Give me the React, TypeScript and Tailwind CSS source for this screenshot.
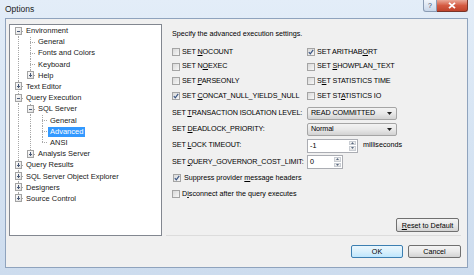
import React from 'react';

type Node = { label: string; depth: number; exp?: '+' | '-'; selected?: boolean };

const tree: Node[] = [
  { label: 'Environment', depth: 0, exp: '-' },
  { label: 'General', depth: 1 },
  { label: 'Fonts and Colors', depth: 1 },
  { label: 'Keyboard', depth: 1 },
  { label: 'Help', depth: 1, exp: '+' },
  { label: 'Text Editor', depth: 0, exp: '+' },
  { label: 'Query Execution', depth: 0, exp: '-' },
  { label: 'SQL Server', depth: 1, exp: '-' },
  { label: 'General', depth: 2 },
  { label: 'Advanced', depth: 2, selected: true },
  { label: 'ANSI', depth: 2 },
  { label: 'Analysis Server', depth: 1, exp: '+' },
  { label: 'Query Results', depth: 0, exp: '+' },
  { label: 'SQL Server Object Explorer', depth: 0, exp: '+' },
  { label: 'Designers', depth: 0, exp: '+' },
  { label: 'Source Control', depth: 0, exp: '+' },
];

const hasNext = (i: number) => {
  const d = tree[i].depth;
  for (let j = i + 1; j < tree.length; j++) {
    if (tree[j].depth < d) return false;
    if (tree[j].depth === d) return true;
  }
  return false;
};

const ancestorAt = (i: number, k: number) => {
  for (let j = i - 1; j >= 0; j--) if (tree[j].depth === k) return j;
  return -1;
};

const H = 11.2;

// one 12px column of the tree guide lines
const GuideCell = ({ up, down, across, exp }: { up: boolean; down: boolean; across: boolean; exp?: '+' | '-' }) => (
  <svg width="12" height={H} viewBox={`0 0 12 ${H}`} className="shrink-0" shapeRendering="crispEdges">
    {up && <line x1="6.5" y1="0" x2="6.5" y2={H / 2} stroke="#a8a8a8" strokeDasharray="1 1" />}
    {down && <line x1="6.5" y1={H / 2} x2="6.5" y2={H} stroke="#a8a8a8" strokeDasharray="1 1" />}
    {across && <line x1="6.5" y1={5.5} x2="12" y2={5.5} stroke="#a8a8a8" strokeDasharray="1 1" />}
    {exp && (
      <g>
        <defs>
          <linearGradient id="expg" x1="0" y1="0" x2="1" y2="1">
            <stop offset="0" stopColor="#ffffff" />
            <stop offset="1" stopColor="#dadada" />
          </linearGradient>
        </defs>
        <rect x="3" y="2" width="7" height="7" fill="url(#expg)" stroke="#a3a3a3" />
        <line x1="4.5" y1="5.5" x2="8.5" y2="5.5" stroke="#4a5a78" />
        {exp === '+' && <line x1="6.5" y1="3.5" x2="6.5" y2="7.5" stroke="#4a5a78" />}
      </g>
    )}
  </svg>
);

const TreeRow = ({ i }: { i: number }) => {
  const n = tree[i];
  const cells = [];
  for (let k = 0; k < n.depth; k++) {
    const a = ancestorAt(i, k);
    const cont = a >= 0 && hasNext(a);
    cells.push(<GuideCell key={k} up={cont} down={cont} across={false} />);
  }
  cells.push(<GuideCell key="own" up={i !== 0} down={hasNext(i)} across exp={n.exp} />);
  return (
    <div className="flex items-center" style={{ height: H }}>
      {cells}
      <span
        className={`px-[2px] leading-[10px] whitespace-nowrap ${n.selected ? 'bg-[#3399ff] text-white' : 'text-[#1a1a1a]'}`}
      >
        {n.label}
      </span>
    </div>
  );
};

const U = ({ children }: { children: React.ReactNode }) => (
  <span className="underline underline-offset-[1px] decoration-[0.6px]">{children}</span>
);

const Check = ({ checked }: { checked?: boolean }) => (
  <span className="w-[8px] h-[8px] shrink-0 border border-[#a4a4a4] bg-gradient-to-br from-[#d9d9d9] to-[#f7f7f7] flex items-center justify-center">
    {checked && (
      <svg width="6" height="6" viewBox="0 0 6 6">
        <path d="M0.8 3.2 L2.3 4.8 L5.2 0.9" fill="none" stroke="#3a5583" strokeWidth="1.2" />
      </svg>
    )}
  </span>
);

const CheckItem = ({ checked, children }: { checked?: boolean; children: React.ReactNode }) => (
  <div className="flex items-center gap-[2px] h-[14.67px] whitespace-nowrap">
    <Check checked={checked} />
    <span className="tracking-[-0.1px]">{children}</span>
  </div>
);

const Arrow = () => (
  <svg width="5" height="3" viewBox="0 0 5 3">
    <path d="M0 0 H5 L2.5 3 Z" fill="#222" />
  </svg>
);

const Select = ({ value }: { value: string }) => (
  <div className="w-[90px] h-[13px] border border-[#a5a5a5] rounded-[2px] bg-gradient-to-b from-[#f3f3f3] via-[#e8e8e8] to-[#d2d2d2] flex items-center justify-between pl-[3px] pr-[4px]">
    <span className="leading-[10px] tracking-[-0.1px]">{value}</span>
    <Arrow />
  </div>
);

const Spin = ({ value, w }: { value: string; w: string }) => (
  <div className={`${w} h-[14px] border border-[#abadb3] bg-white flex`}>
    <span className="flex-1 pl-[2px] leading-[11px]">{value}</span>
    <div className="w-[8px] flex flex-col gap-[1px] py-[1px] pr-[1px]">
      <div className="flex-1 border border-[#c9cdd3] bg-gradient-to-b from-[#f7f7f7] to-[#e2e2e2] flex items-center justify-center">
        <svg width="3" height="2" viewBox="0 0 3 2"><path d="M0 2 H3 L1.5 0 Z" fill="#5b6a80" /></svg>
      </div>
      <div className="flex-1 border border-[#c9cdd3] bg-gradient-to-b from-[#f7f7f7] to-[#e2e2e2] flex items-center justify-center">
        <svg width="3" height="2" viewBox="0 0 3 2"><path d="M0 0 H3 L1.5 2 Z" fill="#5b6a80" /></svg>
      </div>
    </div>
  </div>
);

const FieldRow = ({ label, children }: { label: React.ReactNode; children: React.ReactNode }) => (
  <div className="flex items-center h-[16.3px] whitespace-nowrap">
    <span className="w-[135px] shrink-0 tracking-[-0.1px]">{label}</span>
    {children}
  </div>
);

export default function App() {
  return (
    <div
      className="w-[474px] h-[275px] overflow-hidden flex flex-col bg-gradient-to-b from-[#e3edf8] via-[#d6e4f3] to-[#cddcee] text-black"
      style={{ fontFamily: '"Liberation Sans", Arial, sans-serif' }}
    >
      {/* title bar */}
      <div className="h-[18px] flex items-start shrink-0">
        <span className="pl-[5px] pt-[4px] text-[8.5px] leading-[10px] text-[#1b1b1b]">Options</span>
        <div className="ml-auto mr-[6px] flex">
          <div className="w-[14px] h-[12px] border border-t-0 border-[#8a9bb3] rounded-bl-[3px] bg-gradient-to-b from-[#f1f5fb] to-[#c9d7ea] flex items-center justify-center text-[7px] leading-none text-[#3a4b66]">
            ?
          </div>
          <div className="w-[31px] h-[12px] border border-t-0 border-l-0 border-[#7a3428] rounded-br-[3px] bg-gradient-to-b from-[#e9a898] via-[#d45a42] to-[#c0432b] flex items-center justify-center">
            <svg width="8" height="7" viewBox="0 0 8 7">
              <path d="M1 0.8 L7 6.2 M7 0.8 L1 6.2" stroke="#ffffff" strokeWidth="1.8" />
            </svg>
          </div>
        </div>
      </div>

      {/* client area */}
      <div className="ml-[5px] mr-[6px] h-[250px] border border-[#8fa3bd] bg-[#f0f0f0] flex flex-col">
        <div className="flex items-start">
          {/* tree */}
          <div className="ml-[3px] mt-[5px] w-[153px] h-[212px] shrink-0 border border-[#828790] bg-white pl-[2px] pt-[0.5px] text-[7.5px]">
            {tree.map((_, i) => (
              <TreeRow key={i} i={i} />
            ))}
          </div>

          {/* page */}
          <div className="flex-1 pl-[4px] pr-[6px] flex flex-col text-[7.2px]">
            <div className="pl-[6px] flex flex-col">
              <div className="mt-[10px] h-[10px] leading-[10px]">Specify the advanced execution settings.</div>

              <div className="mt-[5.7px] grid grid-cols-[135px_1fr]">
                <CheckItem>SET <U>N</U>OCOUNT</CheckItem>
                <CheckItem checked>SET ARITHAB<U>O</U>RT</CheckItem>
                <CheckItem>SET N<U>O</U>EXEC</CheckItem>
                <CheckItem>SET <U>S</U>HOWPLAN_TEXT</CheckItem>
                <CheckItem>SET <U>P</U>ARSEONLY</CheckItem>
                <CheckItem>S<U>E</U>T STATISTICS TIME</CheckItem>
                <CheckItem checked>SET <U>C</U>ONCAT_NULL_YIELDS_NULL</CheckItem>
                <CheckItem>SET ST<U>A</U>TISTICS IO</CheckItem>
              </div>

              <div className="mt-[1.7px] flex flex-col">
                <FieldRow label={<>SET <U>T</U>RANSACTION ISOLATION LEVEL:</>}>
                  <Select value="READ COMMITTED" />
                </FieldRow>
                <FieldRow label={<>SET <U>D</U>EADLOCK_PRIORITY:</>}>
                  <Select value="Normal" />
                </FieldRow>
                <FieldRow label={<>SET <U>L</U>OCK TIMEOUT:</>}>
                  <Spin value="-1" w="w-[51px]" />
                  <span className="ml-[5px]">milliseconds</span>
                </FieldRow>
                <FieldRow label={<>SET <U>Q</U>UERY_GOVERNOR_COST_LIMIT:</>}>
                  <Spin value="0" w="w-[36px]" />
                </FieldRow>
              </div>

              <div className="flex flex-col">
                <div className="flex items-center gap-[3px] h-[16px] pl-[1px]">
                  <Check checked />
                  <span>Suppress provider <U>m</U>essage headers</span>
                </div>
                <div className="flex items-center gap-[2px] h-[16px]">
                  <Check />
                  <span>D<U>i</U>sconnect after the query executes</span>
                </div>
              </div>

              <div className="mt-[16px] flex justify-end pr-[2px]">
                <button className="w-[63px] h-[14px] border border-[#707070] rounded-[2px] bg-gradient-to-b from-[#f4f4f4] via-[#e9e9e9] to-[#d3d3d3] text-[7.2px] leading-none">
                  <U>R</U>eset to Default
                </button>
              </div>
            </div>
            <div className="mt-[3px] h-px bg-[#dcdcdc]" />
          </div>
        </div>

        {/* dialog buttons */}
        <div className="mt-[9px] flex justify-end gap-[5px] pr-[6px]">
          <button className="w-[52px] h-[13px] border border-[#3c7fb1] rounded-[2px] bg-gradient-to-b from-[#eaf6fd] via-[#d9f0fc] to-[#bee6fd] text-[7.2px] leading-none">
            OK
          </button>
          <button className="w-[53px] h-[13px] border border-[#707070] rounded-[2px] bg-gradient-to-b from-[#f4f4f4] via-[#e9e9e9] to-[#d3d3d3] text-[7.2px] leading-none">
            Cancel
          </button>
        </div>
      </div>
    </div>
  );
}
